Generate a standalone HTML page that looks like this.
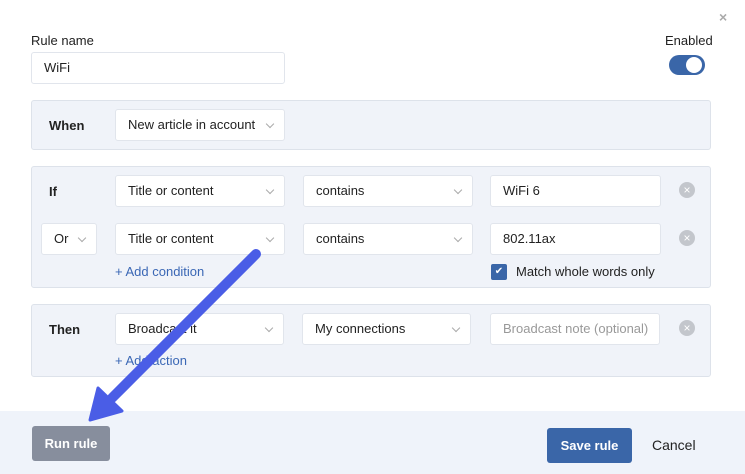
<!DOCTYPE html>
<html><head><style>
*{box-sizing:border-box;margin:0;padding:0}
body{width:745px;height:474px;position:relative;background:#fff;font-family:"Liberation Sans",sans-serif;font-size:13px;color:#222;overflow:hidden}
.a{position:absolute}
.panel{position:absolute;left:31px;width:680px;background:#f0f3f9;border:1px solid #dde2ea;border-radius:3px}
.sel,.inp{position:absolute;height:32px;background:#fff;border:1px solid #e1e5ec;border-radius:3px;padding-left:12px;line-height:30px;font-size:13px;color:#222}
.sel:after{content:"";position:absolute;right:11px;top:11px;width:5px;height:5px;border-right:1px solid #aaa;border-bottom:1px solid #aaa;transform:rotate(45deg)}
.lab{position:absolute;font-weight:bold;font-size:13px}
.x{position:absolute;width:16px;height:16px;border-radius:50%;background:#c3c6cc;color:#fff;font-size:12px;line-height:16px;text-align:center}
.link{position:absolute;color:#3a67b5;font-size:13px}
</style></head><body>
<div class="a" style="left:719px;top:9px;color:#aaa;font-size:14px;font-weight:bold">×</div>
<div class="a" style="left:31px;top:33px">Rule name</div>
<div class="inp" style="left:31px;top:52px;width:254px">WiFi</div>
<div class="a" style="left:665px;top:33px">Enabled</div>
<div class="a" style="left:669px;top:55px;width:36px;height:20px;border-radius:10px;background:#3a66a8"><div class="a" style="right:3px;top:2px;width:16px;height:16px;border-radius:50%;background:#fff"></div></div>

<div class="panel" style="top:100px;height:50px"></div>
<div class="lab" style="left:49px;top:118px">When</div>
<div class="sel" style="left:115px;top:109px;width:170px">New article in account</div>

<div class="panel" style="top:166px;height:122px"></div>
<div class="lab" style="left:49px;top:184px">If</div>
<div class="sel" style="left:115px;top:175px;width:170px">Title or content</div>
<div class="sel" style="left:303px;top:175px;width:170px">contains</div>
<div class="inp" style="left:490px;top:175px;width:171px">WiFi 6</div>
<div class="x" style="left:679px;top:182px">×</div>
<div class="sel" style="left:41px;top:223px;width:56px">Or</div>
<div class="sel" style="left:115px;top:223px;width:170px">Title or content</div>
<div class="sel" style="left:303px;top:223px;width:170px">contains</div>
<div class="inp" style="left:490px;top:223px;width:171px">802.11ax</div>
<div class="x" style="left:679px;top:230px">×</div>
<div class="link" style="left:115px;top:264px">+ Add condition</div>
<div class="a" style="left:491px;top:264px;width:16px;height:16px;background:#3a66a8;border-radius:2px;color:#fff;font-size:10px;line-height:16px;text-align:center">✔</div>
<div class="a" style="left:516px;top:264px">Match whole words only</div>

<div class="panel" style="top:304px;height:73px"></div>
<div class="lab" style="left:49px;top:322px">Then</div>
<div class="sel" style="left:115px;top:313px;width:169px">Broadcast it</div>
<div class="sel" style="left:302px;top:313px;width:169px">My connections</div>
<div class="inp" style="left:490px;top:313px;width:170px;color:#999">Broadcast note (optional)</div>
<div class="x" style="left:679px;top:320px">×</div>
<div class="link" style="left:115px;top:353px">+ Add action</div>

<div class="a" style="left:0;top:411px;width:745px;height:63px;background:#eff3fa"></div>
<div class="a" style="left:32px;top:426px;width:78px;height:35px;background:#878e9d;border-radius:3px;color:#fff;font-weight:bold;text-align:center;line-height:35px;font-size:13px">Run rule</div>
<div class="a" style="left:547px;top:428px;width:85px;height:35px;background:#3a66a8;border-radius:3px;color:#fff;font-weight:bold;text-align:center;line-height:35px;font-size:13px">Save rule</div>
<div class="a" style="left:652px;top:437px;font-size:14px">Cancel</div>

<svg class="a" style="left:0;top:0" width="745" height="474">
<line x1="256" y1="254" x2="112" y2="398" stroke="#4a5de6" stroke-width="10" stroke-linecap="round"/>
<polygon points="90,420 98,388 122,411" fill="#4a5de6" stroke="#4a5de6" stroke-width="3" stroke-linejoin="round"/>
</svg>
</body></html>
